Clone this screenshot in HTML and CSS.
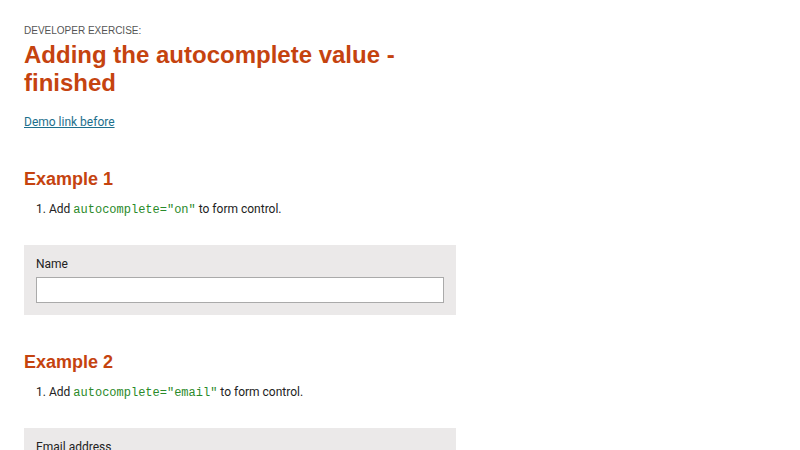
FILE: index.html
```html
<!DOCTYPE html>
<html lang="en">
<head>
    <meta charset="UTF-8">
    <meta name="viewport" content="width=device-width, initial-scale=1.0">
    <title>Adding the autocomplete value - finished</title>
    <link rel="stylesheet" href="styles.css">
</head>
<body>
    <main class="page">
        <p class="kicker">DEVELOPER EXERCISE:</p>
        <h1 class="title">Adding the autocomplete value - finished</h1>
        <p class="demo"><a href="#">Demo link before</a></p>

        <section class="example">
            <h2>Example 1</h2>
            <ol>
                <li>Add <code>autocomplete="on"</code> to form control.</li>
            </ol>
            <div class="field-box">
                <label for="name">Name</label>
                <input type="text" id="name" autocomplete="on">
            </div>
        </section>

        <section class="example">
            <h2>Example 2</h2>
            <ol>
                <li>Add <code>autocomplete="email"</code> to form control.</li>
            </ol>
            <div class="field-box">
                <label for="email">Email address</label>
                <input type="email" id="email" autocomplete="email">
            </div>
        </section>
    </main>
</body>
</html>
```

FILE: styles.css
```css
body {
    margin: 0;
    font-family: Roboto, "Liberation Sans", Arial, sans-serif;
    font-size: 12px;
    color: #222;
    background: #fff;
}
.page {
    width: 432px;
    padding: 23px 24px 40px;
}
.kicker {
    margin: 0;
    font-family: "Liberation Sans", Arial, sans-serif;
    font-size: 10px;
    line-height: 16px;
    color: #555;
}
.title {
    margin: 2px 0 0;
    font-family: "Liberation Sans", Arial, sans-serif;
    font-size: 24px;
    line-height: 28px;
    color: #c5430f;
}
.demo {
    margin: 15px 0 0;
    line-height: 20px;
}
.demo a {
    color: #1d6f8c;
}
.example {
    margin-top: 35px;
}
.example h2 {
    margin: 0;
    font-family: "Liberation Sans", Arial, sans-serif;
    font-size: 18px;
    line-height: 24px;
    color: #c5430f;
}
ol {
    margin: 8px 0 0;
    padding-left: 25px;
    line-height: 20px;
}
code {
    font-family: "Liberation Mono", "Courier New", monospace;
    font-size: 12px;
    line-height: 1;
    color: #2a8a2a;
}
.field-box {
    margin-top: 26px;
    padding: 12px;
    background: #ebe9e9;
}
.field-box label {
    display: block;
    line-height: 14px;
    margin-bottom: 6px;
}
.field-box input {
    display: block;
    box-sizing: border-box;
    width: 100%;
    height: 26px;
    margin: 0;
    border: 1px solid #aaa;
    background: #fff;
}
```
